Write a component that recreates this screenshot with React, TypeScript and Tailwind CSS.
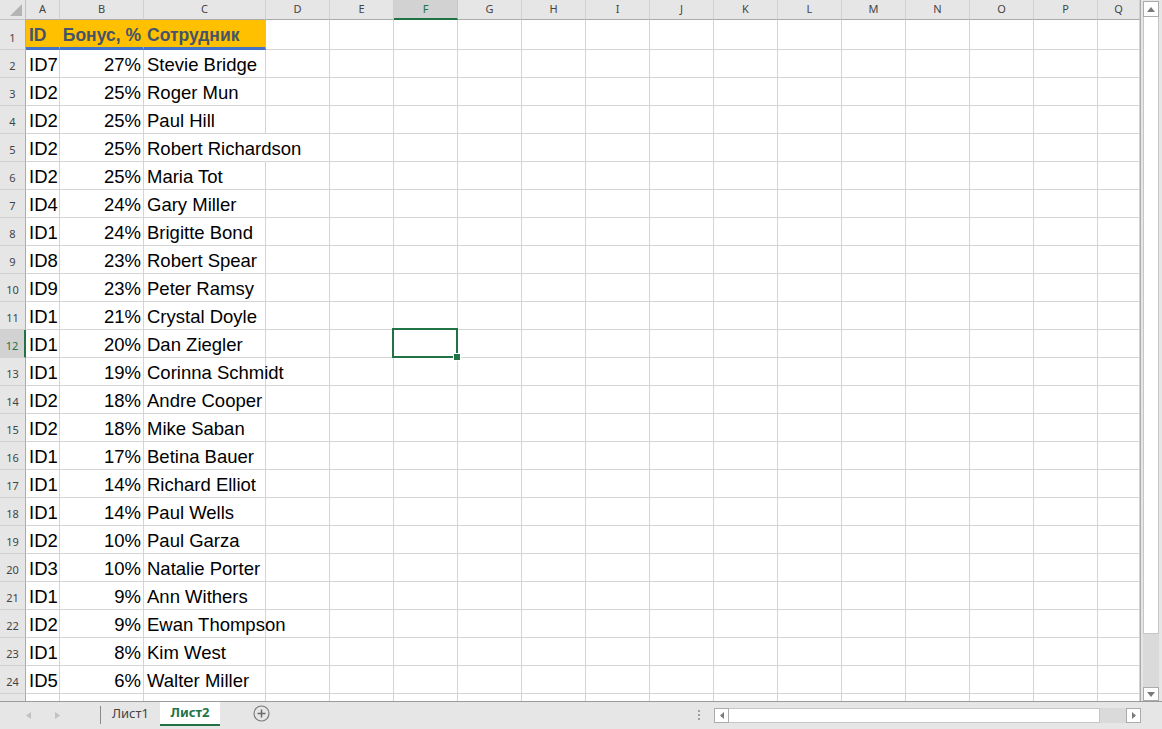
import React from "react";

const rows: [string, string, string][] = [
  ["ID7", "27%", "Stevie Bridge"],
  ["ID2", "25%", "Roger Mun"],
  ["ID2", "25%", "Paul Hill"],
  ["ID2", "25%", "Robert Richardson"],
  ["ID2", "25%", "Maria Tot"],
  ["ID4", "24%", "Gary Miller"],
  ["ID1", "24%", "Brigitte Bond"],
  ["ID8", "23%", "Robert Spear"],
  ["ID9", "23%", "Peter Ramsy"],
  ["ID1", "21%", "Crystal Doyle"],
  ["ID1", "20%", "Dan Ziegler"],
  ["ID1", "19%", "Corinna Schmidt"],
  ["ID2", "18%", "Andre Cooper"],
  ["ID2", "18%", "Mike Saban"],
  ["ID1", "17%", "Betina Bauer"],
  ["ID1", "14%", "Richard Elliot"],
  ["ID1", "14%", "Paul Wells"],
  ["ID2", "10%", "Paul Garza"],
  ["ID3", "10%", "Natalie Porter"],
  ["ID1", "9%", "Ann Withers"],
  ["ID2", "9%", "Ewan Thompson"],
  ["ID1", "8%", "Kim West"],
  ["ID5", "6%", "Walter Miller"],
];

const letters = ["A", "B", "C", "D", "E", "F", "G", "H", "I", "J", "K", "L", "M", "N", "O", "P", "Q"];

const uiFont = "font-['Segoe_UI','Noto_Sans',sans-serif]";

const ColHeaders = () => (
  <>
    <div className="relative bg-[#e6e6e6] border-r border-b border-[#c0c0c0]">
      <svg className="absolute left-[10px] top-[4px]" width="12" height="12" viewBox="0 0 12 12">
        <polygon points="12,0 12,12 0,12" fill="#b4b4b4" />
      </svg>
    </div>
    {letters.map((l) =>
      l === "F" ? (
        <div
          key={l}
          className={`${uiFont} flex items-center justify-center text-[11px] text-[#217346] bg-[#d2d2d2] border-r border-[#c6c6c6] border-b-2 border-b-[#217346]`}
        >
          {l}
        </div>
      ) : (
        <div
          key={l}
          className={`${uiFont} flex items-center justify-center text-[11px] text-[#444] bg-[#e6e6e6] border-r border-[#d0d0d0] border-b border-b-[#ababab]`}
        >
          {l}
        </div>
      )
    )}
  </>
);

const RowHeader = ({ n, selected }: { n?: number; selected?: boolean }) => (
  <div
    className={`${uiFont} flex items-end justify-center text-[11px] leading-[14px] pb-[4px] border-b border-[#d0d0d0] ${
      selected
        ? "bg-[#d2d2d2] text-[#217346] border-r-2 border-r-[#217346]"
        : "bg-[#e6e6e6] text-[#444] border-r border-r-[#ababab]"
    }`}
  >
    {n}
  </div>
);

const Empty = ({ sel }: { sel?: boolean }) => (
  <div className="relative border-r border-b border-[#d4d4d4]">
    {sel && (
      <div className="absolute -left-[2px] -top-[2px] -right-[1px] -bottom-[1px] border-2 border-[#217346] z-10">
        <div className="absolute -right-[4px] -bottom-[4px] w-[6px] h-[6px] bg-[#217346] outline outline-1 outline-white" />
      </div>
    )}
  </div>
);

export default function App() {
  return (
    <div className="w-[1162px] h-[729px] bg-white overflow-hidden flex flex-col font-['Liberation_Sans',Arial,sans-serif]">
      <div className="flex h-[702px] border-b border-[#9b9b9b]">
        <div className="w-[1141px] h-[701px] overflow-hidden border-r border-[#ababab]">
          <div className="grid grid-cols-[26px_34px_84px_122px_repeat(13,64px)_42px] grid-rows-[20px_30px_repeat(24,28px)]">
            <ColHeaders />

            <RowHeader n={1} />
            <div className="flex items-end pl-[3px] pb-[1px] bg-[#ffc000] border-b-[3px] border-[#4472c4] border-r border-r-[#ffc000] text-[17.5px] leading-[21px] font-bold text-[#44546a] whitespace-nowrap overflow-hidden">
              ID
            </div>
            <div className="flex items-end justify-end pr-[2px] pb-[1px] bg-[#ffc000] border-b-[3px] border-[#4472c4] border-r border-r-[#ffc000] text-[17.5px] leading-[21px] font-bold text-[#44546a] whitespace-nowrap">
              Бонус, %
            </div>
            <div className="flex items-end pl-[3px] pb-[1px] bg-[#ffc000] border-b-[3px] border-[#4472c4] border-r border-r-[#ffc000] text-[17.5px] leading-[21px] font-bold text-[#44546a] whitespace-nowrap">
              Сотрудник
            </div>
            {letters.slice(3).map((l) => (
              <Empty key={"r1" + l} />
            ))}

            {rows.map(([id, bonus, name], i) => {
              const n = i + 2;
              const wide = name === "Robert Richardson";
              return (
                <React.Fragment key={n}>
                  <RowHeader n={n} selected={n === 12} />
                  <div className="flex items-end pl-[3px] pb-[2px] border-r border-b border-[#d4d4d4] text-[18.5px] leading-[21px] text-black whitespace-nowrap overflow-hidden">
                    {id}
                  </div>
                  <div className="flex items-end justify-end pr-[2px] pb-[2px] border-r border-b border-[#d4d4d4] text-[18.5px] leading-[21px] text-black whitespace-nowrap">
                    {bonus}
                  </div>
                  <div
                    className={`flex items-end pl-[3px] pb-[2px] border-r border-b border-[#d4d4d4] text-[18.5px] leading-[21px] text-black whitespace-nowrap overflow-visible relative z-[1] ${
                      wide ? "border-r-white" : ""
                    }`}
                  >
                    {name}
                  </div>
                  {letters.slice(3).map((l) => (
                    <Empty key={l} sel={n === 12 && l === "F"} />
                  ))}
                </React.Fragment>
              );
            })}

            <RowHeader />
            {letters.map((l) => (
              <Empty key={"r25" + l} />
            ))}
          </div>
        </div>

        {/* vertical scrollbar */}
        <div className="w-[21px] h-[701px] bg-[#e6e6e6] flex flex-col pl-[2px] pt-[1px]">
          <div className="w-[16px] h-[16px] bg-white border border-[#ababab] flex items-center justify-center">
            <svg width="8" height="5" viewBox="0 0 8 5">
              <polygon points="4,0 8,5 0,5" fill="#7a7a7a" />
            </svg>
          </div>
          <div className="w-[16px] h-[617px] bg-white border border-t-0 border-[#c6c6c6]" />
          <div className="w-[16px] flex-1 bg-[#dadada]" />
          <div className="w-[16px] h-[14px] bg-white border border-[#ababab] flex items-center justify-center">
            <svg width="8" height="5" viewBox="0 0 8 5">
              <polygon points="0,0 8,0 4,5" fill="#7a7a7a" />
            </svg>
          </div>
        </div>
      </div>

      {/* sheet tabs bar */}
      <div className={`${uiFont} flex items-start h-[27px] bg-[#e6e6e6]`}>
        <div className="w-[100px] h-[27px] flex items-center pl-[26px] gap-[24px]">
          <svg width="5" height="7" viewBox="0 0 5 7">
            <polygon points="5,0 5,7 0,3.5" fill="#c2c2c2" />
          </svg>
          <svg width="5" height="7" viewBox="0 0 5 7">
            <polygon points="0,0 0,7 5,3.5" fill="#c2c2c2" />
          </svg>
        </div>
        <div className="w-px h-[18px] mt-[4px] bg-[#8a8a8a]" />
        <div className="w-[59px] h-[24px] flex items-center justify-center text-[13px] text-[#444]">Лист1</div>
        <div className="w-[60px] h-[24px] flex items-center justify-center bg-white border-b-2 border-[#217346] text-[13px] font-bold text-[#217346]">
          Лист2
        </div>
        <div className="ml-[33px] mt-[3px] w-[17px] h-[17px]">
          <svg width="17" height="17" viewBox="0 0 17 17">
            <circle cx="8.5" cy="8.5" r="7.5" fill="none" stroke="#7a7a7a" strokeWidth="1.2" />
            <line x1="8.5" y1="4.5" x2="8.5" y2="12.5" stroke="#6a6a6a" strokeWidth="1.5" />
            <line x1="4.5" y1="8.5" x2="12.5" y2="8.5" stroke="#6a6a6a" strokeWidth="1.5" />
          </svg>
        </div>
        <div className="flex-1" />
        <div className="w-[2px] mt-[8px] flex flex-col gap-[2px]">
          <div className="w-[2px] h-[2px] bg-[#a0a0a0]" />
          <div className="w-[2px] h-[2px] bg-[#a0a0a0]" />
          <div className="w-[2px] h-[2px] bg-[#a0a0a0]" />
        </div>
        <div className="ml-[14px] mt-[6px] w-[427px] h-[15px] flex">
          <div className="w-[15px] h-[15px] bg-white border border-[#ababab] flex items-center justify-center">
            <svg width="4" height="7" viewBox="0 0 4 7">
              <polygon points="4,0 4,7 0,3.5" fill="#7a7a7a" />
            </svg>
          </div>
          <div className="w-[371px] h-[15px] bg-white border border-l-0 border-[#c6c6c6]" />
          <div className="flex-1 h-[15px] bg-[#dadada]" />
          <div className="w-[15px] h-[15px] bg-white border border-[#ababab] flex items-center justify-center">
            <svg width="4" height="7" viewBox="0 0 4 7">
              <polygon points="0,0 0,7 4,3.5" fill="#7a7a7a" />
            </svg>
          </div>
        </div>
        <div className="w-[21px]" />
      </div>
    </div>
  );
}
